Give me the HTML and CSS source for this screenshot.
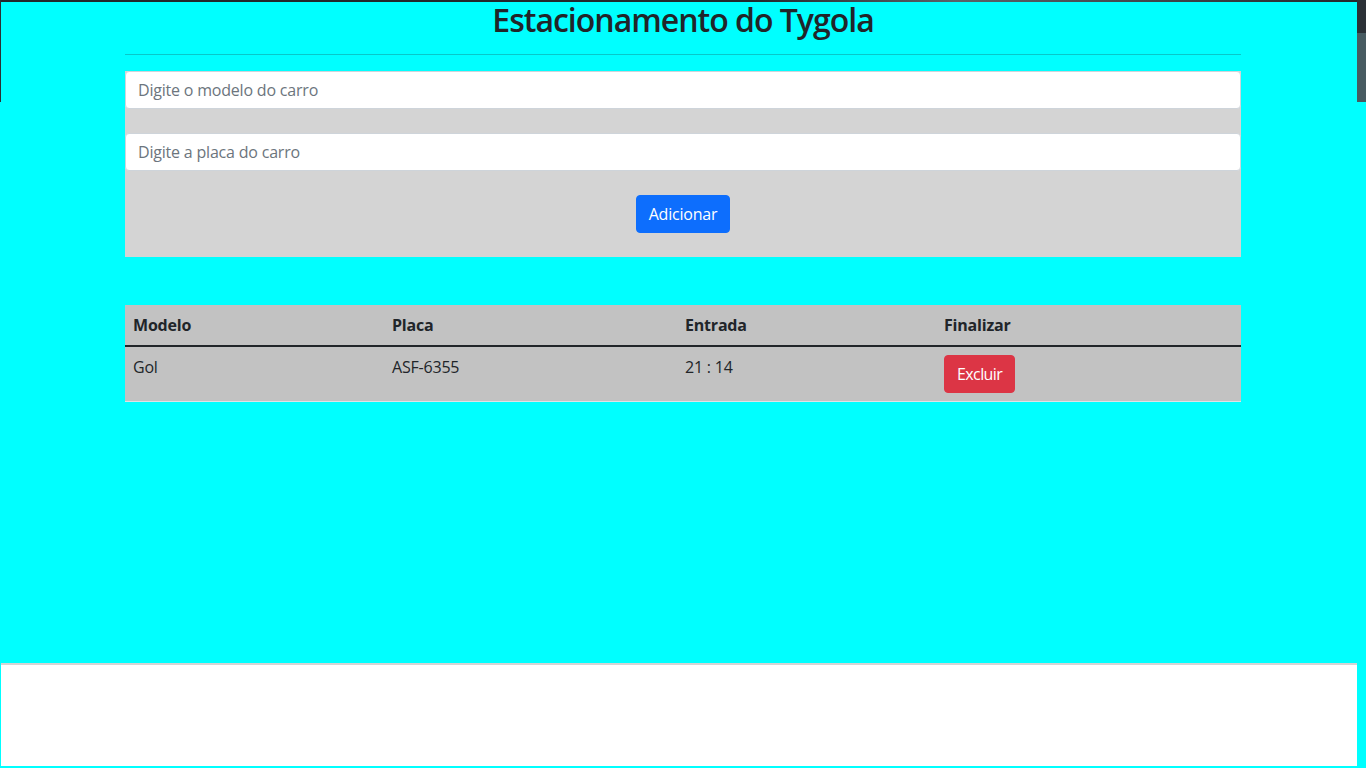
FILE: index.html
```html
<!DOCTYPE html>
<html lang="pt-BR">
<head>
<meta charset="utf-8">
<title>Estacionamento do Tygola</title>
<link rel="stylesheet" href="styles.css">
</head>
<body>
<div class="page">
  <div class="container">
    <h2 class="title">Estacionamento do Tygola</h2>
    <hr class="rule">
    <form class="car-form">
      <input class="field" type="text" placeholder="Digite o modelo do carro">
      <input class="field" type="text" placeholder="Digite a placa do carro">
      <div class="actions">
        <button type="button" class="btn btn-primary">Adicionar</button>
      </div>
    </form>
    <table class="cars">
      <colgroup>
        <col class="c1"><col class="c2"><col class="c3"><col class="c4">
      </colgroup>
      <thead>
        <tr><th>Modelo</th><th>Placa</th><th>Entrada</th><th>Finalizar</th></tr>
      </thead>
      <tbody>
        <tr><td>Gol</td><td>ASF-6355</td><td>21 : 14</td><td><button type="button" class="btn btn-danger">Excluir</button></td></tr>
      </tbody>
    </table>
  </div>
</div>
<div class="blank"></div>
<div class="edge-top"></div>
<div class="edge-left"></div>
<div class="edge-right"></div>
</body>
</html>
```
FILE: styles.css
```css
* { box-sizing: border-box; }
html, body { margin: 0; padding: 0; }
body {
  background: #00ffff;
  font-family: "Open Sans", "Noto Sans", sans-serif;
  font-size: 16px;
  line-height: 1.5;
  color: #212529;
  position: relative;
  height: 768px;
  overflow: hidden;
}
.page {
  background: #00ffff;
  height: 663px;
  padding-top: 1px;
}
.container {
  width: 1140px;
  margin: 0 auto;
  padding: 0 12px;
}
.title {
  margin: 0;
  font-size: 32px;
  font-weight: 600;
  line-height: 37px;
  text-align: center;
  letter-spacing: -1px;
}
.rule {
  margin: 16px 0;
  border: 0;
  border-top: 1px solid #212529;
  opacity: 0.25;
}
.car-form {
  background: #d4d4d4;
  display: flex;
  flex-direction: column;
  gap: 24px;
  padding-bottom: 24px;
  margin: 0 0 48px;
}
.field {
  display: block;
  width: 100%;
  height: 38px;
  padding: 6px 12px;
  font: inherit;
  font-size: 16px;
  color: #212529;
  background: #fff;
  border: 1px solid #ced4da;
  border-radius: 4px;
  letter-spacing: -0.2px;
}
.field::placeholder { color: #6c757d; }
.actions { display: flex; justify-content: center; }
.btn {
  font: inherit;
  font-size: 16px;
  line-height: 24px;
  padding: 6px 12px;
  border: 1px solid transparent;
  border-radius: 4px;
  color: #fff;
  cursor: pointer;
  letter-spacing: -0.2px;
}
.btn-primary { background: #0d6efd; border-color: #0d6efd; }
.btn-danger { background: #dc3545; border-color: #dc3545; letter-spacing: -0.6px; }
.cars {
  width: 100%;
  table-layout: fixed;
  border-collapse: collapse;
  background: #c2c2c2;
  vertical-align: top;
}
.c1 { width: 259px; }
.c2 { width: 293px; }
.c3 { width: 259px; }
.c4 { width: 305px; }
.cars th, .cars td {
  padding: 8px;
  text-align: left;
  vertical-align: top;
  border-bottom: 1px solid #dee2e6;
  letter-spacing: -0.2px;
}
.cars th { font-weight: 700; border-bottom: 2px solid #212529; }
.blank {
  height: 103px;
  margin: 0 9px 0 1px;
  background: #ffffff;
  border-top: 2px solid #d4d4d4;
}
.edge-top {
  position: absolute; left: 0; top: 0; width: 1366px; height: 2px;
  background: linear-gradient(90deg, #23272b 0%, #23272b 55%, #5a6268 70%, #23272b 100%);
}
.edge-left {
  position: absolute; left: 0; top: 0; width: 1px; height: 102px; background: #2b3035;
}
.edge-right {
  position: absolute; left: 1357px; top: 0; width: 9px; height: 102px;
  background: linear-gradient(180deg, #2b3137 0, #2b3137 33px, #475b61 33px);
}
```
